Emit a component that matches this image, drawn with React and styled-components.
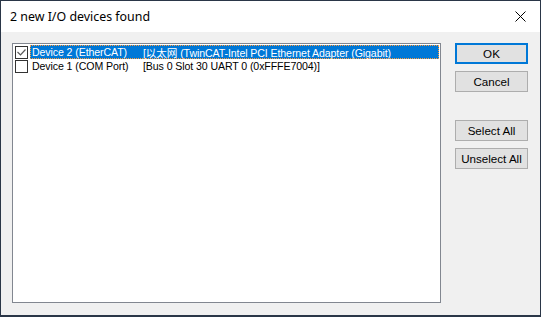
import React from 'react';
import styled, { createGlobalStyle } from 'styled-components';

const GlobalStyle = createGlobalStyle`
    html, body {
        margin: 0;
        padding: 0;
        background: #ffffff;
    }
`;

const devices = [
    { name: 'Device 2 (EtherCAT)', info: '[以太网 (TwinCAT-Intel PCI Ethernet Adapter (Gigabit)', checked: true, selected: true },
    { name: 'Device 1 (COM Port)', info: '[Bus 0 Slot 30 UART 0 (0xFFFE7004)]', checked: false, selected: false },
];

const Window = styled.div`
    width: 541px;
    height: 317px;
    box-sizing: border-box;
    border: 1px solid #2a3647;
    border-bottom-width: 2px;
    display: flex;
    flex-direction: column;
    background: #f0f0f0;
`;

const TitleBar = styled.div`
    height: 31px;
    flex: none;
    background: #ffffff;
    display: flex;
    align-items: center;
    justify-content: space-between;
    padding: 0 14px 0 9px;
    font-family: "Noto Sans", "Noto Sans CJK SC", sans-serif;
    font-size: 12.4px;
    color: #000000;
`;

const CloseIcon = () => (
    <svg width="11" height="11" viewBox="0 0 11 11">
        <path d="M0.5 0.5 L10.5 10.5 M10.5 0.5 L0.5 10.5" stroke="#000" strokeWidth="1" fill="none"/>
    </svg>
);

const Body = styled.div`
    flex: 1;
    display: flex;
    gap: 14px;
    padding: 11px 12px 12px 11px;
`;

const List = styled.div`
    width: 429px;
    height: 260px;
    box-sizing: border-box;
    border: 1px solid #828790;
    background: #ffffff;
    padding: 1px 1px 0 2px;
    display: flex;
    flex-direction: column;
    font-family: "Liberation Sans", "Noto Sans CJK SC", sans-serif;
    font-size: 10.6px;
    letter-spacing: -0.1px;
`;

const Row = styled.div`
    height: 14px;
    display: flex;
    align-items: center;
`;

const Box = styled.div`
    width: 13px;
    height: 13px;
    box-sizing: border-box;
    border: 1px solid #333333;
    background: #ffffff;
    flex: none;
    display: flex;
    align-items: center;
    justify-content: center;
`;

const Label = styled.div`
    flex: 1;
    height: 14px;
    margin-left: 2px;
    padding-left: 2px;
    display: flex;
    align-items: center;
    white-space: nowrap;
    background: ${props => props.selected ? '#0078d7' : 'transparent'};
    color: ${props => props.selected ? '#ffffff' : '#000000'};
    outline: ${props => props.selected ? '1px dotted #ff9c3c' : 'none'};
    outline-offset: -1px;
`;

const NameCol = styled.span`
    width: 111px;
    flex: none;
`;

const Buttons = styled.div`
    display: flex;
    flex-direction: column;
    width: 73px;
`;

const Button = styled.button`
    height: 21px;
    box-sizing: border-box;
    margin: 0 0 ${props => props.spacer ? 28 : 7}px 0;
    padding: 0;
    background: #e1e1e1;
    border: ${props => props.primary ? '2px solid #0078d7' : '1px solid #adadad'};
    font-family: "Liberation Sans", sans-serif;
    font-size: 11.6px;
    color: #000000;
`;

const CheckMark = () => (
    <svg width="11" height="11" viewBox="0 0 11 11">
        <path d="M1.5 5 L4.5 8 L9.5 2.5" stroke="#5a5a5a" strokeWidth="1.2" fill="none"/>
    </svg>
);

const App = () => {
    return (
        <>
            <GlobalStyle/>
            <Window>
                <TitleBar>
                    <span>2 new I/O devices found</span>
                    <CloseIcon/>
                </TitleBar>
                <Body>
                    <List>
                        {devices.map(device => (
                            <Row key={device.name}>
                                <Box>{device.checked && <CheckMark/>}</Box>
                                <Label selected={device.selected}>
                                    <NameCol>{device.name}</NameCol>
                                    <span>{device.info}</span>
                                </Label>
                            </Row>
                        ))}
                    </List>
                    <Buttons>
                        <Button primary>OK</Button>
                        <Button spacer>Cancel</Button>
                        <Button>Select All</Button>
                        <Button>Unselect All</Button>
                    </Buttons>
                </Body>
            </Window>
        </>
    );
};

export default App;
